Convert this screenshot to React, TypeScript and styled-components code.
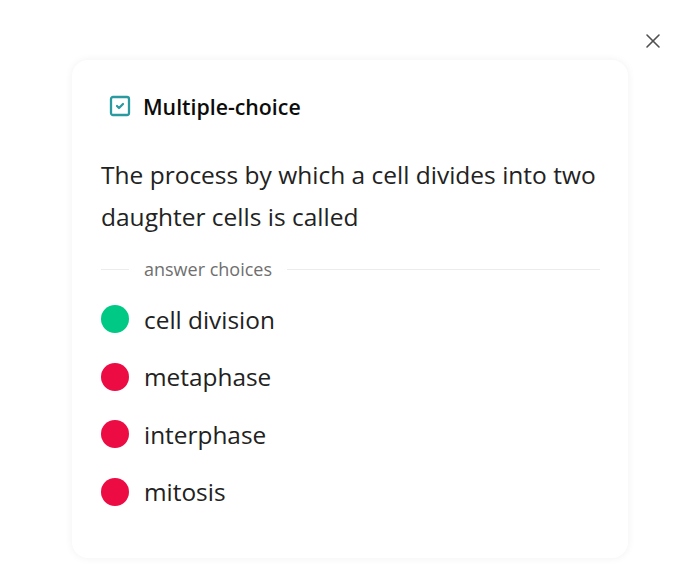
import styled, { createGlobalStyle } from 'styled-components';
import { SquareCheck, X } from 'lucide-react';

const GlobalStyle = createGlobalStyle`
  body {
    margin: 0;
    background: #ffffff;
    font-family: 'Open Sans', 'Noto Sans', sans-serif;
    color: #222222;
  }
`;

type Choice = {
  label: string;
  correct: boolean;
};

const choices: Choice[] = [
  { label: 'cell division', correct: true },
  { label: 'metaphase', correct: false },
  { label: 'interphase', correct: false },
  { label: 'mitosis', correct: false },
];

const App = () => {
  return (
    <Page>
      <GlobalStyle />
      <TopBar>
        <CloseButton aria-label="close">
          <X size={24} strokeWidth={1.6} />
        </CloseButton>
      </TopBar>
      <Card>
        <Header>
          <SquareCheck size={24} strokeWidth={2.3} color="#2b9aa0" />
          <Title>Multiple-choice</Title>
        </Header>
        <Question>The process by which a cell divides into two daughter cells is called</Question>
        <Divider>
          <Line $short />
          <DividerLabel>answer choices</DividerLabel>
          <Line />
        </Divider>
        <Choices>
          {choices.map((c) => (
            <ChoiceRow key={c.label}>
              <Dot $correct={c.correct} />
              <ChoiceText>{c.label}</ChoiceText>
            </ChoiceRow>
          ))}
        </Choices>
      </Card>
    </Page>
  );
};

const Page = styled.div`
  width: 700px;
  height: 578px;
  box-sizing: border-box;
  padding: 27px 0 0 72px;
  display: flex;
  flex-direction: column;
  gap: 5px;
`;

const TopBar = styled.div`
  display: flex;
  justify-content: flex-end;
  width: 595px;
  height: 28px;
`;

const CloseButton = styled.button`
  display: flex;
  align-items: center;
  justify-content: center;
  width: 28px;
  height: 28px;
  padding: 0;
  border: none;
  background: transparent;
  color: #505050;
  cursor: pointer;
`;

const Card = styled.div`
  width: 556px;
  box-sizing: border-box;
  padding: 28px 28px 44px 29px;
  background: #ffffff;
  border-radius: 16px;
  box-shadow: 0px 0px 8px rgba(0, 0, 0, 0.06);
  display: flex;
  flex-direction: column;
`;

const Header = styled.div`
  display: flex;
  align-items: center;
  gap: 11px;
  height: 36px;
  padding-left: 7px;
`;

const Title = styled.h2`
  margin: 0;
  font-size: 21.3px;
  font-weight: 600;
  color: #0c0c0c;
`;

const Question = styled.p`
  margin: 30px 0 0;
  font-size: 24.5px;
  line-height: 42px;
  font-weight: 400;
  color: #222222;
`;

const Divider = styled.div`
  display: flex;
  align-items: center;
  gap: 15px;
  height: 20px;
  margin-top: 21px;
`;

const Line = styled.div<{ $short?: boolean }>`
  height: 1px;
  background: #ececec;
  flex: ${({ $short }) => ($short ? '0 0 28px' : '1')};
`;

const DividerLabel = styled.span`
  font-size: 18px;
  color: #6f6f6f;
`;

const Choices = styled.div`
  display: flex;
  flex-direction: column;
  gap: 13.5px;
  margin-top: 18px;
`;

const ChoiceRow = styled.div`
  display: flex;
  align-items: center;
  gap: 15px;
  height: 44px;
`;

const Dot = styled.span<{ $correct: boolean }>`
  width: 28px;
  height: 28px;
  border-radius: 50%;
  flex: 0 0 28px;
  background: ${({ $correct }) => ($correct ? '#00c985' : '#ec0b43')};
`;

const ChoiceText = styled.span`
  font-size: 24.4px;
  color: #222222;
`;

export default App;
